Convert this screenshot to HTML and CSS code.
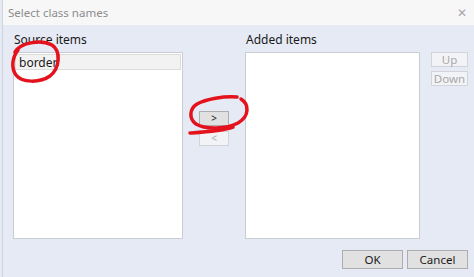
FILE: index.html
```html
<!DOCTYPE html>
<html lang="en">
<head>
    <meta charset="UTF-8">
    <title>Select class names</title>
    <link rel="stylesheet" href="styles.css">
</head>
<body>
    <div class="window">
        <!-- Title bar -->
        <div class="titlebar">
            <span class="title">Select class names</span>
            <span class="close">&#x2715;</span>
        </div>

        <!-- Lists -->
        <div class="content">
            <div class="column source">
                <div class="label">Source items</div>
                <div class="list">
                    <div class="item selected">border</div>
                </div>
            </div>
            <div class="middle">
                <button class="btn small">&gt;</button>
                <button class="btn small" disabled>&lt;</button>
            </div>
            <div class="column added">
                <div class="label">Added items</div>
                <div class="list"></div>
            </div>
            <div class="order">
                <button class="btn order-btn" disabled>Up</button>
                <button class="btn order-btn" disabled>Down</button>
            </div>
        </div>

        <!-- Footer -->
        <div class="footer">
            <button class="btn wide">OK</button>
            <button class="btn wide">Cancel</button>
        </div>

        <!-- red marker annotations -->
        <svg class="marks" width="474" height="277" viewBox="0 0 474 277">
            <path d="M15 52 C 20 43, 40 39, 52 45 C 61 51, 60 68, 50 76 C 40 83, 22 83, 16 75 C 11 68, 12 58, 18 50"/>
            <path d="M237 97 C 224 96, 206 99, 197 104 C 189 109, 189 119, 196 124 C 206 130, 226 129, 238 123 C 250 116, 249 104, 241 99 M 190 133 C 205 132, 222 131, 233 127"/>
        </svg>
    </div>
</body>
</html>
```

FILE: styles.css
```css
* {
    margin: 0;
    padding: 0;
    box-sizing: border-box;
}
body {
    background-color: #e6eaf4;
    font-family: "Noto Sans", "Open Sans", sans-serif;
    font-size: 12px;
    color: #1a1a1a;
}
.window {
    position: relative;
    width: 474px;
    height: 277px;
    background-color: #e6eaf4;
    border-left: 1px solid #cfd3dc;
    margin-left: 2px;
    overflow: hidden;
}
/* Title bar */
.titlebar {
    height: 25px;
    background-color: #f7f7f8;
    display: flex;
    align-items: center;
    justify-content: space-between;
    padding: 0 9px 0 5px;
}
.title {
    color: #8c8c8c;
    font-size: 11.5px;
}
.close {
    color: #a8a8a8;
    font-size: 12px;
    font-weight: 300;
}
/* Lists */
.content {
    display: flex;
    padding: 8px 0 0 10px;
}
.column {
    display: flex;
    flex-direction: column;
}
.source {
    width: 170px;
}
.added {
    width: 175px;
}
.label {
    height: 19px;
    line-height: 14px;
    padding-left: 1px;
}
.list {
    height: 187px;
    background: white;
    border: 1px solid #c9ccd2;
    padding: 1px;
}
.item {
    height: 16px;
    line-height: 15px;
    padding-left: 3px;
}
.item.selected {
    background: #f2f2f2;
    border: 1px solid #dcdcdc;
}
.middle {
    width: 62px;
    display: flex;
    flex-direction: column;
    align-items: center;
    gap: 5px;
    padding-top: 78px;
}
.order {
    display: flex;
    flex-direction: column;
    gap: 4px;
    padding: 19px 0 0 11px;
}
/* Buttons */
.btn {
    font-family: inherit;
    font-size: 11.5px;
    background: #e1e1e1;
    border: 1px solid #adadad;
    color: #1a1a1a;
}
.btn:disabled {
    background: #f2f3f6;
    border-color: #d2d4d8;
    color: #a8a8a8;
}
.small {
    width: 30px;
    height: 15px;
    line-height: 11px;
    font-size: 10px;
}
.order-btn {
    width: 37px;
    height: 15px;
    line-height: 12px;
}
.footer {
    display: flex;
    justify-content: flex-end;
    gap: 4px;
    padding: 11px 8px 0 0;
}
.wide {
    width: 61px;
    height: 19px;
    line-height: 16px;
}
/* Annotations */
.marks {
    position: absolute;
    left: -3px;
    top: 0;
    pointer-events: none;
}
.marks path {
    fill: none;
    stroke: #e3121c;
    stroke-width: 3.5;
    stroke-linecap: round;
}
```
